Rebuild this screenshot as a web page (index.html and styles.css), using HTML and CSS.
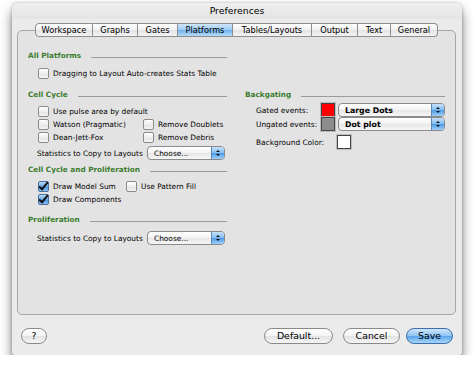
FILE: index.html
```html
<!DOCTYPE html>
<html lang="en">
<head>
    <meta charset="UTF-8">
    <title>Preferences</title>
    <link rel="stylesheet" href="styles.css">
</head>
<body>
    <div class="window">
        <div class="titlebar">Preferences</div>
        <div class="tabview">
            <div class="tabs">
                <div class="tab first" style="width:58px">Workspace</div>
                <div class="tab" style="width:45px">Graphs</div>
                <div class="tab" style="width:40px">Gates</div>
                <div class="tab selected" style="width:55px">Platforms</div>
                <div class="tab" style="width:79px">Tables/Layouts</div>
                <div class="tab" style="width:46px">Output</div>
                <div class="tab" style="width:33px">Text</div>
                <div class="tab last" style="width:47px">General</div>
            </div>
            <div class="panel">
                <div class="col left">
                    <div class="heading h-first">All Platforms</div>
                    <div class="row check-row r-drag">
                        <label class="check"><span class="box"></span>Dragging to Layout Auto-creates Stats Table</label>
                    </div>

                    <div class="heading h-cell">Cell Cycle</div>
                    <div class="row check-row r-pulse">
                        <label class="check"><span class="box"></span>Use pulse area by default</label>
                    </div>
                    <div class="row check-row">
                        <label class="check w-watson"><span class="box"></span>Watson (Pragmatic)</label>
                        <label class="check"><span class="box"></span>Remove Doublets</label>
                    </div>
                    <div class="row check-row">
                        <label class="check w-watson"><span class="box"></span>Dean-Jett-Fox</label>
                        <label class="check"><span class="box"></span>Remove Debris</label>
                    </div>
                    <div class="row popup-row r-stats1">
                        <span class="field-label">Statistics to Copy to Layouts</span>
                        <div class="popup small"><span class="popup-text">Choose...</span><span class="arrows"></span></div>
                    </div>

                    <div class="heading h-ccp">Cell Cycle and Proliferation</div>
                    <div class="row check-row r-model">
                        <label class="check w-model"><span class="box checked"></span>Draw Model Sum</label>
                        <label class="check"><span class="box"></span>Use Pattern Fill</label>
                    </div>
                    <div class="row check-row">
                        <label class="check"><span class="box checked"></span>Draw Components</label>
                    </div>

                    <div class="heading h-prolif">Proliferation</div>
                    <div class="row popup-row r-stats2">
                        <span class="field-label">Statistics to Copy to Layouts</span>
                        <div class="popup small"><span class="popup-text">Choose...</span><span class="arrows"></span></div>
                    </div>
                </div>

                <div class="col right">
                    <div class="heading">Backgating</div>
                    <div class="bg-row r-gated">
                        <span class="bg-label">Gated events:</span>
                        <span class="swatch red"></span>
                        <div class="popup wide"><span class="popup-text bold">Large Dots</span><span class="arrows"></span></div>
                    </div>
                    <div class="bg-row">
                        <span class="bg-label">Ungated events:</span>
                        <span class="swatch gray"></span>
                        <div class="popup wide"><span class="popup-text bold">Dot plot</span><span class="arrows"></span></div>
                    </div>
                    <div class="bg-row r-bgcolor">
                        <span class="bg-label auto">Background Color:</span>
                        <span class="swatch white"></span>
                    </div>
                </div>
            </div>
        </div>
        <div class="footer">
            <button class="btn help">?</button>
            <div class="spacer"></div>
            <button class="btn b-default">Default...</button>
            <button class="btn b-cancel">Cancel</button>
            <button class="btn b-save">Save</button>
        </div>
    </div>
</body>
</html>
```

FILE: styles.css
```css
body {
    margin: 0;
    padding: 3px 0 0 12px;
    background-color: #ffffff;
    font-family: "DejaVu Sans", sans-serif;
    color: #000;
}
.window {
    width: 450px;
    height: 352px;
    background-color: #ebebeb;
    border-radius: 5px 5px 3px 3px;
    box-shadow: 0 7px 12px rgba(0, 0, 0, 0.5), 0 0 3px rgba(0, 0, 0, 0.25);
    display: flex;
    flex-direction: column;
}
.titlebar {
    height: 16px;
    line-height: 15px;
    text-align: center;
    font-size: 9.3px;
    border-radius: 5px 5px 0 0;
    background: linear-gradient(#efefef, #e4e4e4);
}
.tabview {
    margin: 4px 6px 0 5px;
}
.tabs {
    display: flex;
    justify-content: center;
    position: relative;
    z-index: 1;
    height: 14px;
}
.tab {
    box-sizing: border-box;
    height: 14px;
    line-height: 12px;
    font-size: 8.2px;
    text-align: center;
    border: 1px solid #8e8e8e;
    border-left: none;
    background: linear-gradient(#ffffff, #f1f1f1 50%, #e4e4e4 51%, #f3f3f3);
}
.tab.first {
    border-left: 1px solid #8e8e8e;
    border-radius: 4px 0 0 4px;
}
.tab.last {
    border-radius: 0 4px 4px 0;
}
.tab.selected {
    background: linear-gradient(#cfe7fb, #9ccbf4 50%, #71b1ec 51%, #b7dcfa);
}
.panel {
    margin-top: -7px;
    height: 264px;
    padding: 19px 10px 0 10px;
    background-color: #e3e3e3;
    border: 1px solid #a6a6a6;
    border-radius: 5px;
    display: flex;
    gap: 18px;
}
.col {
    display: flex;
    flex-direction: column;
}
.col.left {
    width: 200px;
}
.col.right {
    width: 201px;
    padding-top: 39px;
}
.heading {
    height: 12px;
    line-height: 12px;
    font-size: 7.3px;
    font-weight: bold;
    color: #3c7d30;
    display: flex;
    align-items: center;
}
.heading::after {
    content: "";
    flex: 1;
    margin: 3px 0 0 10px;
    border-top: 1px solid #9c9c9c;
}
.h-cell { margin-top: 9px; }
.h-ccp { margin-top: 4px; }
.h-prolif { margin-top: 8px; }
.row {
    display: flex;
    align-items: center;
    font-size: 7.4px;
}
.check-row {
    height: 13px;
    padding-left: 10px;
}
.r-drag { margin-top: 5px; }
.r-pulse { margin-top: 4px; }
.r-model { margin-top: 4px; }
.check {
    display: flex;
    align-items: center;
    gap: 4px;
    white-space: nowrap;
}
.w-watson { width: 105px; }
.w-model { width: 88px; }
.box {
    width: 9px;
    height: 9px;
    border: 1px solid #8b8b8b;
    border-radius: 2px;
    background: linear-gradient(#ffffff, #eeeeee 50%, #e2e2e2 51%, #f6f6f6);
    position: relative;
}
.box.checked {
    border-color: #4a6f9c;
    background: linear-gradient(#b8d9f8, #6aa9e8 50%, #3e8ae0 51%, #8cc4f3);
}
.box.checked::after {
    content: "";
    position: absolute;
    left: 2px;
    top: -2px;
    width: 3px;
    height: 8px;
    border: solid #111;
    border-width: 0 2.5px 2.5px 0;
    transform: rotate(40deg);
}
.popup-row {
    height: 14px;
    padding-left: 9px;
}
.r-stats1 { margin-top: 2px; }
.r-stats2 { margin-top: 5px; }
.field-label {
    width: 110px;
    white-space: nowrap;
}
.popup {
    height: 12px;
    border: 1px solid #8a8a8a;
    border-radius: 4px;
    background: linear-gradient(#ffffff, #f2f2f2 50%, #e6e6e6 51%, #f7f7f7);
    display: flex;
    align-items: center;
    overflow: hidden;
}
.popup.small {
    width: 76px;
}
.popup.wide {
    flex: 1;
}
.popup-text {
    flex: 1;
    padding-left: 6px;
    font-size: 7.4px;
    white-space: nowrap;
}
.popup-text.bold {
    font-weight: bold;
    font-size: 7.8px;
}
.arrows {
    width: 12px;
    height: 12px;
    border-left: 1px solid #5a86b8;
    background: linear-gradient(#c4e1fb, #84bdf1 50%, #4b98e6 51%, #9fd0f8);
    position: relative;
}
.arrows::before, .arrows::after {
    content: "";
    position: absolute;
    left: 4px;
    border-left: 2px solid transparent;
    border-right: 2px solid transparent;
}
.arrows::before {
    top: 3px;
    border-bottom: 2.5px solid #111;
}
.arrows::after {
    top: 7px;
    border-top: 2.5px solid #111;
}
.bg-row {
    height: 14px;
    display: flex;
    align-items: center;
    padding-left: 11px;
    font-size: 7.4px;
}
.r-gated { margin-top: 2px; }
.r-bgcolor { margin-top: 4px; }
.bg-label {
    width: 65px;
    white-space: nowrap;
}
.bg-label.auto {
    width: auto;
    margin-right: 13px;
}
.swatch {
    width: 12px;
    height: 12px;
    border: 1px solid #444;
    outline: 1px solid #bdbdbd;
    margin-right: 3px;
}
.swatch.red { background-color: #ff0000; }
.swatch.gray { background-color: #8c8c8c; }
.swatch.white { background-color: #ffffff; }
.footer {
    display: flex;
    align-items: center;
    margin-top: 13px;
    padding: 0 9px;
}
.spacer {
    flex: 1;
}
.btn {
    height: 16px;
    padding: 0;
    font-family: "DejaVu Sans", sans-serif;
    font-size: 9.4px;
    line-height: 14px;
    border: 1px solid #8a8a8a;
    border-radius: 8px;
    background: linear-gradient(#ffffff, #f3f3f3 50%, #e2e2e2 51%, #f5f5f5);
    color: #000;
}
.help { width: 26px; }
.b-default { width: 69px; }
.b-cancel { width: 57px; margin-left: 10px; }
.b-save {
    width: 47px;
    margin-left: 6px;
    border-color: #3f6fa8;
    background: linear-gradient(#cfe6fb, #8cc2f2 50%, #5aa4ea 51%, #a8d6fa);
}
```
